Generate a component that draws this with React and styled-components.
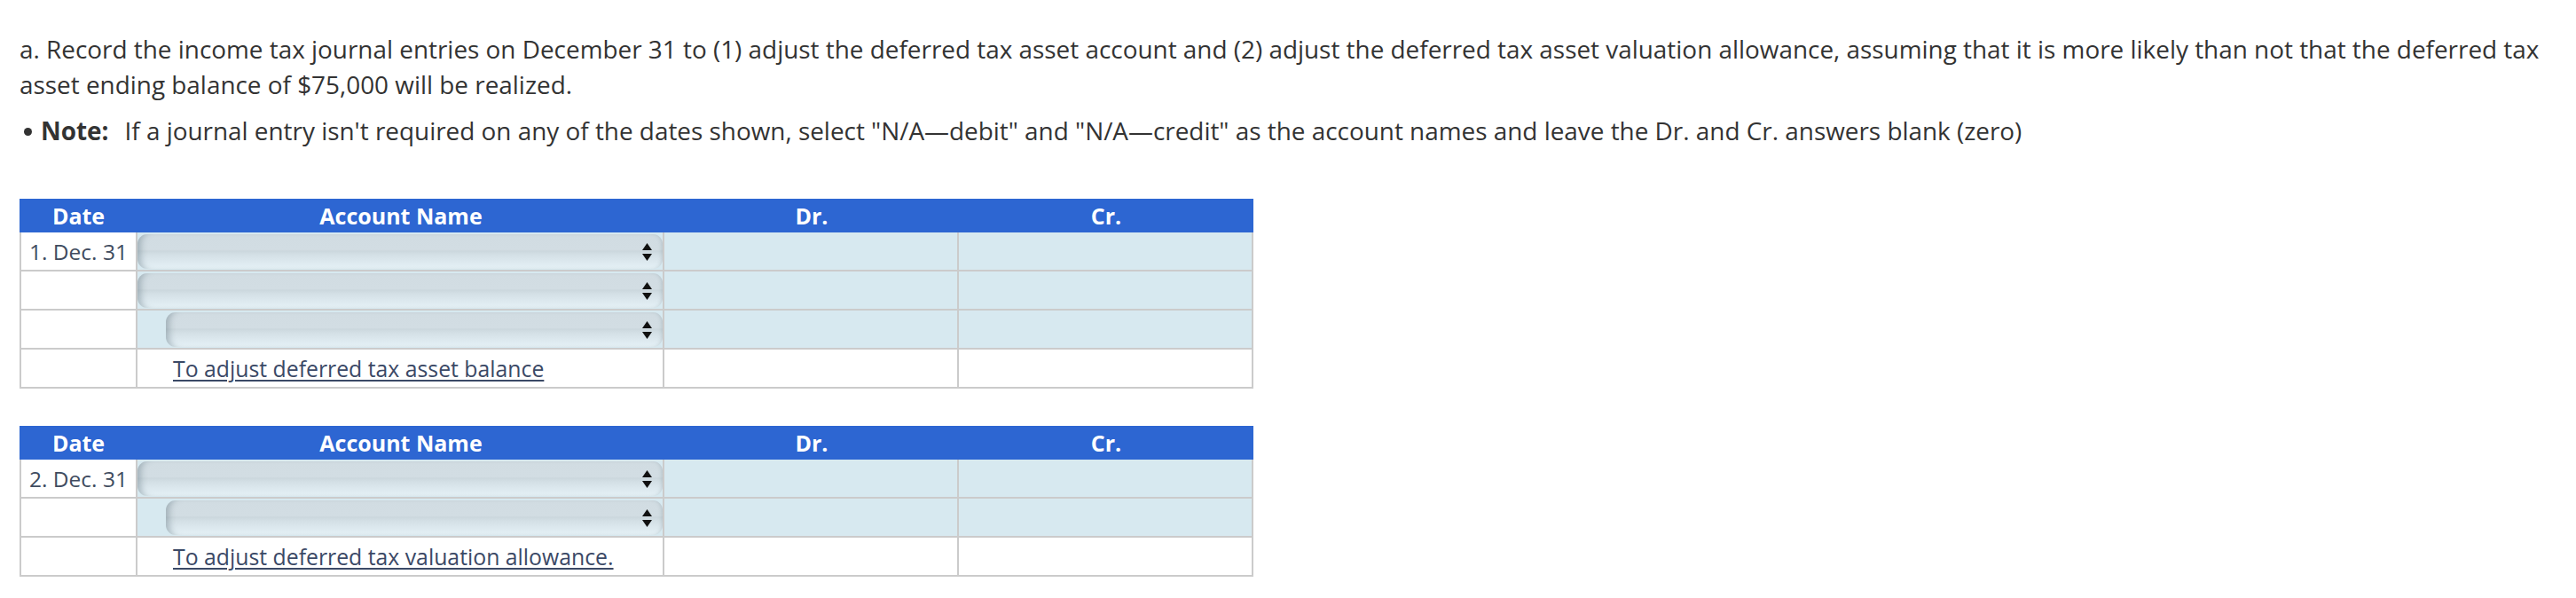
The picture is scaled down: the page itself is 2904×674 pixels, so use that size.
import React from "react";
import styled, { createGlobalStyle } from "styled-components";

const GlobalStyle = createGlobalStyle`
  html, body { margin: 0; padding: 0; background: #fff; }
  body { font-family: "Open Sans", "Liberation Sans", sans-serif; color: #333; }
  * { box-sizing: border-box; }
`;

const Page = styled.div`
  width: 2904px;
  padding: 35px 0 0 22px;
`;

const Prompt = styled.p`
  margin: 0;
  font-size: 27.9px;
  line-height: 40px;
  color: #333;
`;

const Note = styled.p`
  margin: 12px 0 0;
  font-size: 27.9px;
  line-height: 40px;
  color: #333;
`;

const Bullet = styled.span`
  display: inline-block;
  width: 9px;
  height: 9px;
  border-radius: 50%;
  background: #333;
  margin: 0 10px 0 5px;
  vertical-align: middle;
  position: relative;
  top: -2px;
`;

const NoteLabel = styled.strong`
  font-weight: 700;
  margin-right: 18px;
`;

const Journal = styled.div`
  width: 1391px;
  margin-top: ${(p) => p.$mt}px;
`;

const cols = "133px 594px 332px 332px";

const HeadRow = styled.div`
  display: grid;
  grid-template-columns: ${cols};
  height: 38px;
  background: #2d66d2;
`;

const HeadCell = styled.div`
  display: flex;
  align-items: center;
  justify-content: center;
  color: #fff;
  font-weight: 700;
  font-size: 25px;
`;

const Row = styled.div`
  display: grid;
  grid-template-columns: ${cols};
  height: 44px;
`;

const Cell = styled.div`
  border-right: 2px solid #cbcbcb;
  border-bottom: 2px solid #cbcbcb;
  border-left: ${(p) => (p.$first ? "2px solid #cbcbcb" : "none")};
  background: ${(p) => (p.$fill ? "#d7e9f0" : "#fff")};
  display: flex;
  align-items: ${(p) => (p.$top ? "flex-start" : "center")};
`;

const DateText = styled.span`
  font-size: 24.5px;
  color: #404c60;
  padding-left: 9px;
`;

const SelectWrap = styled.div`
  position: relative;
  flex: 1;
  height: 39px;
  margin: 2px 0 0 ${(p) => (p.$indent ? 32 : 0)}px;
`;

const Select = styled.select`
  appearance: none;
  -webkit-appearance: none;
  width: 100%;
  height: 100%;
  border: none;
  border-radius: 11px;
  outline: none;
  background: linear-gradient(
    to bottom,
    #d1dce2 0%,
    #d2dde3 44%,
    #cbd7dd 49%,
    #d3dfe5 58%,
    #dce8ee 78%,
    #e5f1f6 100%
  );
  box-shadow: inset 9px 0 7px -5px rgba(90, 110, 120, 0.38),
    inset -4px 0 4px -3px rgba(90, 110, 120, 0.25);
  font-family: inherit;
  font-size: 22px;
  color: #333;
`;

const Arrows = styled.svg`
  position: absolute;
  right: 12px;
  top: 10px;
  pointer-events: none;
`;

const Amount = styled.input`
  width: 100%;
  height: 100%;
  border: none;
  outline: none;
  background: transparent;
  font-family: inherit;
  font-size: 22px;
`;

const Memo = styled.a`
  font-size: 24.8px;
  color: #3b4966;
  text-decoration: underline;
  text-underline-offset: 3px;
  text-decoration-thickness: 2px;
  padding-left: 40px;
  white-space: nowrap;
`;

function AccountSelect({ indent }) {
  return (
    <SelectWrap $indent={indent}>
      <Select defaultValue="">
        <option value=""></option>
      </Select>
      <Arrows width="11" height="20" viewBox="0 0 11 20">
        <polygon points="5.5,0 11,8 0,8" fill="#111" />
        <polygon points="0,12 11,12 5.5,20" fill="#111" />
      </Arrows>
    </SelectWrap>
  );
}

function EntryRow({ date, indent }) {
  return (
    <Row>
      <Cell $first>{date && <DateText>{date}</DateText>}</Cell>
      <Cell $fill $top>
        <AccountSelect indent={indent} />
      </Cell>
      <Cell $fill>
        <Amount />
      </Cell>
      <Cell $fill>
        <Amount />
      </Cell>
    </Row>
  );
}

function MemoRow({ text }) {
  return (
    <Row>
      <Cell $first />
      <Cell>
        <Memo href="#">{text}</Memo>
      </Cell>
      <Cell />
      <Cell />
    </Row>
  );
}

function Header() {
  return (
    <HeadRow>
      <HeadCell>Date</HeadCell>
      <HeadCell>Account Name</HeadCell>
      <HeadCell>Dr.</HeadCell>
      <HeadCell>Cr.</HeadCell>
    </HeadRow>
  );
}

export default function App() {
  return (
    <Page>
      <GlobalStyle />
      <Prompt>
        a. Record the income tax journal entries on December 31 to (1) adjust the
        deferred tax asset account and (2) adjust the deferred tax asset valuation
        allowance, assuming that it is more likely than not that the deferred tax
        asset ending balance of $75,000 will be realized.
      </Prompt>
      <Note>
        <Bullet />
        <NoteLabel>Note:</NoteLabel>
        If a journal entry isn't required on any of the dates shown, select
        "N/A—debit" and "N/A—credit" as the account names and leave the Dr. and
        Cr. answers blank (zero)
      </Note>
      <Journal $mt={57}>
        <Header />
        <EntryRow date="1. Dec. 31" />
        <EntryRow />
        <EntryRow indent />
        <MemoRow text="To adjust deferred tax asset balance" />
      </Journal>
      <Journal $mt={42}>
        <Header />
        <EntryRow date="2. Dec. 31" />
        <EntryRow indent />
        <MemoRow text="To adjust deferred tax valuation allowance." />
      </Journal>
    </Page>
  );
}
